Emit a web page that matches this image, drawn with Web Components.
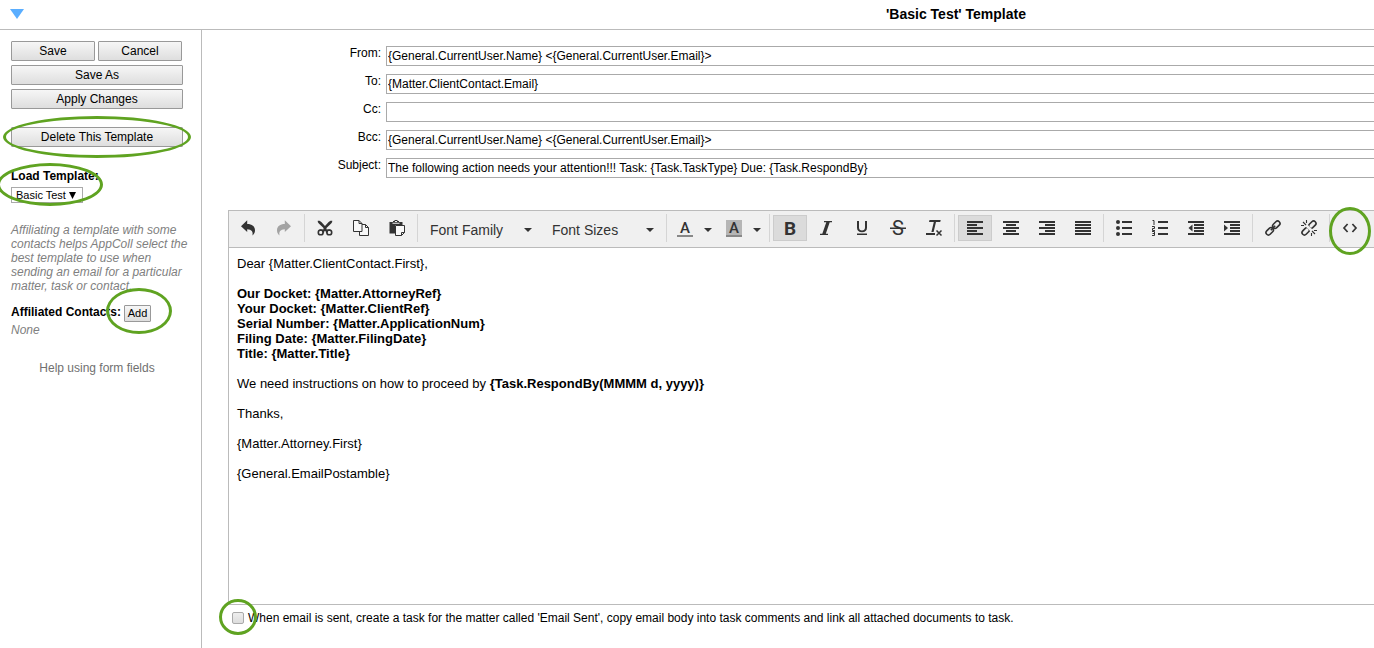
<!DOCTYPE html>
<html lang="en">
<head>
<meta charset="utf-8">
<title>'Basic Test' Template</title>
<style>
  html, body { margin: 0; height: 100%; }
  body { background: #fff; color: #000; font: 12px/14px "Liberation Sans", Arial, sans-serif; }
</style>
</head>
<body>
<template-page></template-page>

<script>
const define = (name, html, setup) => {
  const tpl = document.createElement('template');
  tpl.innerHTML = html;
  customElements.define(name, class extends HTMLElement {
    constructor() {
      super();
      this.attachShadow({ mode: 'open' }).append(tpl.content.cloneNode(true));
    }
    connectedCallback() { if (setup) setup(this, this.shadowRoot); }
  });
};

/* Green ring drawn round whatever is slotted in; the four --ring-* values set how far it reaches. */
define('callout-ring', `
  <style>
    :host { display: block; position: relative; }
    i { position: absolute; top: var(--ring-top); right: var(--ring-right); bottom: var(--ring-bottom); left: var(--ring-left);
        border: 3px solid #5fa321; border-radius: 50%; box-sizing: border-box; pointer-events: none; z-index: 2; }
  </style>
  <slot></slot><i></i>`);

define('push-button', `
  <style>
    :host { display: block; }
    button { display: block; width: 100%; height: 20px; padding: 0; box-sizing: border-box; font: inherit; line-height: 16px; color: #000;
             border: 1px solid #999; border-radius: 1px; background: linear-gradient(#f6f6f6, #dedede); }
    :host([small]) button { height: 17px; line-height: 15px; font-size: 11px; }
  </style>
  <button type="button"><slot></slot></button>`);

define('page-header', `
  <style>
    :host { display: flex; align-items: center; height: 27px; padding-bottom: 2px; border-bottom: 1px solid #bbb; box-sizing: content-box; }
    button { border: 0; background: none; padding: 0; margin-left: 10px; width: 14px; height: 10px; }
    svg { display: block; }
    h1 { flex: 1; margin: 0 0 0 514px; font-size: 14px; line-height: 16px; text-align: center; }
  </style>
  <button type="button" aria-label="Collapse"><svg width="14" height="10"><path d="M0 0h14L7 10z" fill="#5aaeff"/></svg></button>
  <h1><slot></slot></h1>`);

define('side-panel', `
  <style>
    :host { display: block; width: 201px; border-right: 1px solid #bbb; box-sizing: content-box; flex: none; }
    .in { padding: 11px 0 0 11px; }
    .buttons { width: 172px; display: flex; flex-direction: column; gap: 4px; }
    .pair { display: grid; grid-template-columns: 84px 84px; gap: 3px; }
    .del { width: 172px; margin-top: 18px; --ring-top: -11px; --ring-right: -8px; --ring-bottom: -11px; --ring-left: -8px; }
    .load { width: 88px; margin-top: 22px; --ring-top: -6px; --ring-right: -4px; --ring-bottom: -3px; --ring-left: -14px; }
    label { display: block; font-weight: bold; white-space: nowrap; }
    .pick { position: relative; width: 72px; margin-top: 4px; }
    select { display: block; appearance: none; width: 72px; height: 16px; box-sizing: border-box; padding: 0 4px; border: 1px solid #aaa; border-radius: 0;
             background: #fff; color: #000; font: 11px/14px "Liberation Sans", Arial, sans-serif; }
    .pick svg { position: absolute; right: 7px; top: 5px; pointer-events: none; }
    p { margin: 20px 8px 0 0; color: #808080; font-style: italic; }
    .aff { display: flex; align-items: flex-start; gap: 3px; margin-top: 12px; }
    .aff b { white-space: nowrap; }
    .add { width: 27px; --ring-top: -17px; --ring-right: -21px; --ring-bottom: -12px; --ring-left: -18px; }
    em { display: block; margin-top: 1px; color: #808080; }
    a { display: block; width: 172px; margin-top: 24px; text-align: center; color: #707070; text-decoration: none; }
  </style>
  <div class="in">
    <div class="buttons">
      <div class="pair"><push-button>Save</push-button><push-button>Cancel</push-button></div>
      <push-button>Save As</push-button>
      <push-button>Apply Changes</push-button>
    </div>
    <callout-ring class="del"><push-button>Delete This Template</push-button></callout-ring>
    <callout-ring class="load">
      <label for="tpl">Load Template:</label>
      <div class="pick"><select id="tpl"><option>Basic Test</option></select>
        <svg width="7" height="7"><path d="M0 0h7L3.5 7z"/></svg></div>
    </callout-ring>
    <p>Affiliating a template with some contacts helps AppColl select the best template to use when sending an email for a particular matter, task or contact.</p>
    <div class="aff"><b>Affiliated Contacts:</b><callout-ring class="add"><push-button small>Add</push-button></callout-ring></div>
    <em>None</em>
    <a href="#help">Help using form fields</a>
  </div>`);

define('field-row', `
  <style>
    :host { display: grid; grid-template-columns: 179px 1fr; column-gap: 5px; align-items: start; }
    label { text-align: right; }
    input { width: 100%; height: 20px; box-sizing: border-box; margin: 0; padding: 0 1px; border: 1px solid #aaa; border-right: 0;
            border-radius: 0; font: inherit; color: #000; background: #fff; }
  </style>
  <label for="f"></label><input id="f" type="text">`,
  (el, root) => {
    root.querySelector('label').textContent = el.getAttribute('label');
    root.querySelector('input').value = el.getAttribute('value') || '';
  });

const LETTER = 'font-family="Roboto, Liberation Sans, sans-serif" text-anchor="middle"';
const rows = (list) => list.map(([x, w], i) => `<path d="M${x} ${1 + i * 3}h${w}v2h-${w}z"/>`).join('');
const CHAIN = `<g fill="none" stroke="#333" stroke-width="1.6"><rect x="-4.2" y="-2.4" width="8.4" height="4.8" rx="2.4" transform="translate(11.3 4.7) rotate(-45)"/><rect x="-4.2" y="-2.4" width="8.4" height="4.8" rx="2.4" transform="translate(4.7 11.3) rotate(-45)"/>`;
const ICONS = {
  undo: '<path d="M1 6.2 7.2.3V4C12 4 15 6.4 15 10.2c0 2.3-1 4.2-2.6 5.3.9-3.6-.6-6.1-5.2-6.3V12z"/>',
  redo: '<path fill="#a3a3a3" d="M15 6.2 8.8.3V4C4 4 1 6.4 1 10.2c0 2.3 1 4.2 2.6 5.3-.9-3.6.6-6.1 5.2-6.3V12z"/>',
  cut: '<path d="M.8.8C2.300.4 3.600 1 4.600 2.200L8 6l3.400-3.800C12.400 1 13.700.4 15.200.8c.2 1-.2 1.900-1 2.700L9.500 8v2h-3V8L1.800 3.500C1 2.700.6 1.800.8.8z"/><g fill="none" stroke="#333" stroke-width="1.600"><circle cx="3.700" cy="12.400" r="2.400"/><circle cx="12.300" cy="12.400" r="2.400"/><path d="M2.500 10.200h11M6.100 12.800 7.200 9.500M9.900 12.800 8.800 9.500"/></g>',
  copy: '<path fill="#f8f8f8" stroke="#333" d="M6.500 4.500h6l3 3v8h-9z"/><path fill="#f8f8f8" stroke="#333" d="M.5.5h5.500l3 3v8H.5z"/><path fill="none" stroke="#333" d="M6 .5v3h3M12.500 4.500v3h3"/>',
  paste: '<path d="M.5 2H4V1h1.500V0h3v1H10v1h3.500v3H6v8.500H.5z"/><path fill="#f0f0f0" d="M3.500 2.700h7v1h-7zM6 1h2v1H6z"/><path fill="#f8f8f8" stroke="#333" d="M6.500 5.500h9v7l-3 3h-6z"/><path fill="none" stroke="#333" d="M12.500 15.500v-3h3"/>',
  fore: `<text x="8" y="13" font-size="15" font-weight="500" ${LETTER}>A</text><path fill="#888" d="M0 15h16v2H0z"/>`,
  back: `<path fill="#b5b5b5" d="M0 0h16v17H0z"/><text x="8" y="13" font-size="15" font-weight="500" ${LETTER}>A</text><path fill="#888" d="M0 15h16v2H0z"/>`,
  bold: `<text x="8" y="15" font-size="19" font-weight="700" ${LETTER}>B</text>`,
  italic: '<path d="M6 1h8v1.300h-2.300L7.800 13.700H10V15H2v-1.300h2.300L8.300 2.300H6z"/>',
  under: '<path d="M3 1h2v6.500c0 2 1.100 3 3 3s3-1 3-3V1h2v6.700c0 2.900-1.900 4.500-5 4.500s-5-1.600-5-4.500zM3 13.500h10V15H3z"/>',
  strike: `<text x="8" y="15" font-size="20" ${LETTER}>S</text><path d="M0 7.500h16V9H0z"/>`,
  clear: '<path d="M3.500 0h11.200l-.5 2H10L7.600 12H5.400L7.800 2H3zM0 13h9v2H0z"/><path fill="none" stroke="#333" stroke-width="1.500" d="m10.500 10.500 5 5m0-5-5 5"/>',
  left: rows([[0,16],[0,10],[0,16],[0,10],[0,16]]),
  center: rows([[0,16],[3,10],[0,16],[3,10],[0,16]]),
  right: rows([[0,16],[6,10],[0,16],[6,10],[0,16]]),
  full: rows([[0,16],[0,16],[0,16],[0,16],[0,16]]),
  bullets: '<circle cx="2" cy="2" r="2"/><circle cx="2" cy="8" r="2"/><circle cx="2" cy="14" r="2"/><path d="M6 1h10v2H6zM6 7h10v2H6zM6 13h10v2H6z"/>',
  numbers: '<g fill="none" stroke="#333"><path d="M.5.5H2V5M0 6.500h2.500v2h-2v2H3M0 11.500h2.500v4H0M.5 13.500h2"/></g><path d="M6 1h10v2H6zM6 7h10v2H6zM6 13h10v2H6z"/>',
  outdent: rows([[0,16],[6,10],[6,10],[6,10],[0,16]]) + '<path d="M4.500 4.500v7L.5 8z"/>',
  indent: rows([[0,16],[6,10],[6,10],[6,10],[0,16]]) + '<path d="M0 4.500v7L4 8z"/>',
  link: CHAIN + '<path d="m5.800 10.200 4.400-4.400"/></g>',
  unlink: CHAIN + '</g><path stroke="#efefef" stroke-width="2.600" d="m5.500 5.500 5 5"/><path fill="none" stroke="#333" stroke-width="1.100" d="m2 2 3 3M5.500 0v3M0 5.500h3M14 14l-3-3M10.500 16v-3M16 10.500h-3"/>',
  code: '<path fill="none" stroke="#333" stroke-width="1.700" d="M5.600 4 2 8l3.600 4M10.400 4 14 8l-3.600 4"/>'
};

/* Toolbar button: an icon, an icon with a caret, or (slotted) text with a caret. */
define('tool-button', `
  <style>
    :host { display: block; flex: none; width: 34px; }
    :host([caret]) { width: 47px; }
    :host([wide]) { width: 120px; }
    button { display: flex; align-items: center; justify-content: center; width: 100%; height: 26px; box-sizing: border-box; padding: 0;
             border: 1px solid transparent; background: none; color: #333; font: 14px/20px "Liberation Sans", Arial, sans-serif; }
    :host([pressed]) button { background: #dbdbdb; border-color: #ccc; }
    :host([caret]) button { justify-content: space-between; padding: 0 4px 0 6px; }
    :host([wide]) button { padding: 4px 8px 0; }
    svg { display: block; overflow: visible; fill: #333; }
    .caret { display: none; }
    :host([caret]) .caret { display: block; margin-top: 4px; }
    :host([wide]) .caret { margin-top: 0; }
  </style>
  <button type="button"><slot></slot><svg class="caret" width="8" height="4"><path d="M0 0h8L4 4z"/></svg></button>`,
  (el, root) => {
    const icon = el.getAttribute('icon'), button = root.querySelector('button');
    if (!icon) return;
    button.setAttribute('aria-label', icon);
    root.querySelector('slot').outerHTML = `<svg width="16" height="16" viewBox="0 0 16 16">${ICONS[icon]}</svg>`;
  });

define('tool-group', `
  <style>
    :host { display: flex; gap: 2px; flex: none; padding: 4px 3px 6px 3px; }
    :host(:not(:first-child)) { border-style: solid; border-width: 0 0 0 1px; border-image: linear-gradient(transparent 4px, #d5d5d5 4px, #d5d5d5 30px, transparent 30px) 1; }
    :host(:first-child) { padding-left: 2px; }
  </style>
  <slot></slot>`);

define('rich-editor', `
  <style>
    :host { display: flex; flex-direction: column; flex: 1; border: 1px solid #bbb; border-right: 0; }
    .bar { display: flex; background: #f0f0f0; border-bottom: 1px solid #bbb; }
    .code { --ring-top: -8px; --ring-right: -4px; --ring-bottom: -14px; --ring-left: -4px; }
    .text { flex: 1; padding: 8px; font-size: 13px; line-height: 15px; outline: 0; }
    ::slotted(p) { margin: 0 0 15px; }
  </style>
  <div class="bar" role="toolbar">
    <tool-group><tool-button icon="undo"></tool-button><tool-button icon="redo"></tool-button></tool-group>
    <tool-group><tool-button icon="cut"></tool-button><tool-button icon="copy"></tool-button><tool-button icon="paste"></tool-button></tool-group>
    <tool-group><tool-button caret wide>Font Family</tool-button><tool-button caret wide>Font Sizes</tool-button></tool-group>
    <tool-group><tool-button caret icon="fore"></tool-button><tool-button caret icon="back"></tool-button></tool-group>
    <tool-group><tool-button pressed icon="bold"></tool-button><tool-button icon="italic"></tool-button><tool-button icon="under"></tool-button><tool-button icon="strike"></tool-button><tool-button icon="clear"></tool-button></tool-group>
    <tool-group><tool-button pressed icon="left"></tool-button><tool-button icon="center"></tool-button><tool-button icon="right"></tool-button><tool-button icon="full"></tool-button></tool-group>
    <tool-group><tool-button icon="bullets"></tool-button><tool-button icon="numbers"></tool-button><tool-button icon="outdent"></tool-button><tool-button icon="indent"></tool-button></tool-group>
    <tool-group><tool-button icon="link"></tool-button><tool-button icon="unlink"></tool-button></tool-group>
    <tool-group><callout-ring class="code"><tool-button icon="code"></tool-button></callout-ring></tool-group>
  </div>
  <div class="text" contenteditable="true" role="textbox" aria-label="Email body"><slot></slot></div>`);

define('task-option', `
  <style>
    :host { display: flex; align-items: center; gap: 4px; height: 26px; padding: 0 0 17px 4px; }
    callout-ring { flex: none; --ring-top: -13px; --ring-right: -13px; --ring-bottom: -11px; --ring-left: -13px; }
    input { display: block; appearance: none; width: 12px; height: 12px; margin: 0; box-sizing: border-box; border: 1px solid #aaa; border-radius: 2px;
            background: linear-gradient(#eee, #ddd); }
    label { white-space: nowrap; }
  </style>
  <callout-ring><input type="checkbox" id="c"></callout-ring><label for="c"><slot></slot></label>`);

define('template-page', `
  <style>
    :host { display: flex; flex-direction: column; min-height: 100vh; overflow: hidden; }
    .cols { display: flex; flex: 1; }
    main { display: flex; flex-direction: column; flex: 1; min-width: 0; }
    form { display: flex; flex-direction: column; gap: 8px; padding: 16px 0 32px; }
    .mail { display: flex; flex-direction: column; flex: 1; margin-left: 26px; }
  </style>
  <page-header>'Basic Test' Template</page-header>
  <div class="cols">
    <side-panel></side-panel>
    <main>
      <form>
        <field-row label="From:" value="{General.CurrentUser.Name} &lt;{General.CurrentUser.Email}&gt;"></field-row>
        <field-row label="To:" value="{Matter.ClientContact.Email}"></field-row>
        <field-row label="Cc:"></field-row>
        <field-row label="Bcc:" value="{General.CurrentUser.Name} &lt;{General.CurrentUser.Email}&gt;"></field-row>
        <field-row label="Subject:" value="The following action needs your attention!!! Task: {Task.TaskType} Due: {Task.RespondBy}"></field-row>
      </form>
      <div class="mail">
        <rich-editor>
          <p>Dear {Matter.ClientContact.First},</p>
          <p><b>Our Docket: {Matter.AttorneyRef}<br>Your Docket: {Matter.ClientRef}<br>Serial Number: {Matter.ApplicationNum}<br>Filing Date: {Matter.FilingDate}<br>Title: {Matter.Title}</b></p>
          <p>We need instructions on how to proceed by <b>{Task.RespondBy(MMMM d, yyyy)}</b></p>
          <p>Thanks,</p>
          <p>{Matter.Attorney.First}</p>
          <p>{General.EmailPostamble}</p>
        </rich-editor>
        <task-option>When email is sent, create a task for the matter called 'Email Sent', copy email body into task comments and link all attached documents to task.</task-option>
      </div>
    </main>
  </div>`);
</script>
</body>
</html>
